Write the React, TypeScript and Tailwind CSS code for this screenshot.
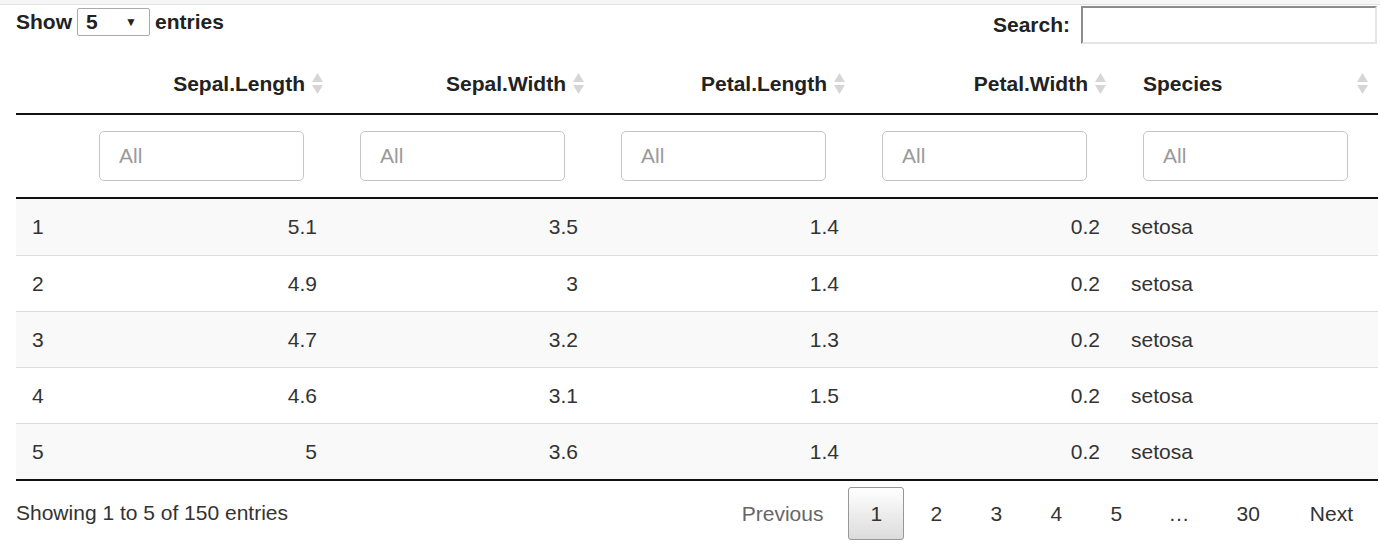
// Iris DataTable: show/search controls, column filters, striped rows, pager
const rows = [
  { id: 1, sl: "5.1", sw: "3.5", pl: "1.4", pw: "0.2", sp: "setosa" },
  { id: 2, sl: "4.9", sw: "3", pl: "1.4", pw: "0.2", sp: "setosa" },
  { id: 3, sl: "4.7", sw: "3.2", pl: "1.3", pw: "0.2", sp: "setosa" },
  { id: 4, sl: "4.6", sw: "3.1", pl: "1.5", pw: "0.2", sp: "setosa" },
  { id: 5, sl: "5", sw: "3.6", pl: "1.4", pw: "0.2", sp: "setosa" },
];

const numericCols = ["Sepal.Length", "Sepal.Width", "Petal.Length", "Petal.Width"];

const gridCols = "grid grid-cols-[50px_261px_261px_261px_261px_1fr]";

const SortIcon = () => (
  <svg width="11" height="22" viewBox="0 0 11 22" className="block">
    <path d="M5.5 0 L11 9 L0 9 Z" fill="#d6d6d6" />
    <path d="M0 12 L11 12 L5.5 21 Z" fill="#d6d6d6" />
  </svg>
);

const FilterInput = () => (
  <div className="pl-[33px] pr-[23px]">
    <input
      placeholder="All"
      className="w-[205px] h-[50px] border border-[#c4c4c4] rounded-[5px] pl-[19px] text-[21px] text-[#333] placeholder:text-[#9a9a9a] bg-white outline-none"
    />
  </div>
);

const PageBtn = ({
  label,
  active = false,
  muted = false,
  wide = false,
}: {
  label: string;
  active?: boolean;
  muted?: boolean;
  wide?: boolean;
}) => (
  <div
    className={
      (wide ? "px-[22px] " : "px-[20px] ") +
      (active
        ? "min-w-[56px] h-[53px] flex items-center justify-center border border-[#979797] rounded-[3px] bg-gradient-to-b from-white to-[#dcdcdc] text-[#333]"
        : "min-w-[56px] h-[53px] flex items-center justify-center border border-transparent " +
          (muted ? "text-[#666]" : "text-[#333]"))
    }
  >
    {label}
  </div>
);

export default function App() {
  return (
    <div className="w-[1380px] h-[548px] bg-white overflow-hidden text-[21px] text-[#333] font-['Liberation_Sans',Arial,sans-serif]">
      <div className="h-[5px] bg-[#f6f6f6] border-b border-[#e2e2e2]" />

      {/* controls */}
      <div className="ml-4 w-[1361px] flex justify-between items-start">
        <div className="flex items-center gap-[5px] pt-[1px] font-bold text-[#222]">
          <span>Show</span>
          <div className="w-[73px] h-[28px] border border-[#a9a9a9] rounded-[2px] flex items-center justify-between pl-[8px] pr-[12px]">
            <span>5</span>
            <span className="text-[12px]">▼</span>
          </div>
          <span>entries</span>
        </div>
        <div className="flex items-center gap-[11px] pt-[1px] font-bold text-[#222]">
          <span>Search:</span>
          <div className="w-[296px] h-[38px] border-2 border-t-[#8c8c8c] border-l-[#8c8c8c] border-r-[#e4e4e4] border-b-[#e4e4e4] bg-white" />
        </div>
      </div>

      {/* table */}
      <div className="ml-4 w-[1362px] mt-[10px]">
        <div className={gridCols + " h-[61px] border-b-2 border-[#111] font-bold text-[#222]"}>
          <div />
          {numericCols.map((c) => (
            <div key={c} className="relative flex items-center justify-end pr-[22px]">
              <span>{c}</span>
              <div className="absolute right-[4px] top-1/2 -translate-y-1/2">
                <SortIcon />
              </div>
            </div>
          ))}
          <div className="relative flex items-center pl-[33px]">
            <span>Species</span>
            <div className="absolute right-[10px] top-1/2 -translate-y-1/2">
              <SortIcon />
            </div>
          </div>
        </div>

        <div className={gridCols + " py-[16px] border-b-2 border-[#111]"}>
          <div />
          <FilterInput />
          <FilterInput />
          <FilterInput />
          <FilterInput />
          <FilterInput />
        </div>

        {rows.map((r, i) => (
          <div
            key={r.id}
            className={
              gridCols +
              " h-[56px] items-center " +
              (i % 2 === 0 ? "bg-[#f9f9f9]" : "bg-white") +
              (i > 0 ? " border-t border-[#dddddd]" : "")
            }
          >
            <div className="pl-[16px]">{r.id}</div>
            <div className="text-right pr-[10px]">{r.sl}</div>
            <div className="text-right pr-[10px]">{r.sw}</div>
            <div className="text-right pr-[10px]">{r.pl}</div>
            <div className="text-right pr-[10px]">{r.pw}</div>
            <div className="pl-[21px]">{r.sp}</div>
          </div>
        ))}
        <div className="border-t-2 border-[#111]" />

        {/* footer */}
        <div className="flex justify-between items-start">
          <div className="pt-[16px]">Showing 1 to 5 of 150 entries</div>
          <div className="flex items-center gap-[4px] pt-[6px] pr-[2px]">
            <PageBtn label="Previous" muted />
            <PageBtn label="1" active />
            <PageBtn label="2" />
            <PageBtn label="3" />
            <PageBtn label="4" />
            <PageBtn label="5" />
            <div className="h-[53px] px-[20px] flex items-center">…</div>
            <PageBtn label="30" wide />
            <PageBtn label="Next" wide />
          </div>
        </div>
      </div>
    </div>
  );
}
